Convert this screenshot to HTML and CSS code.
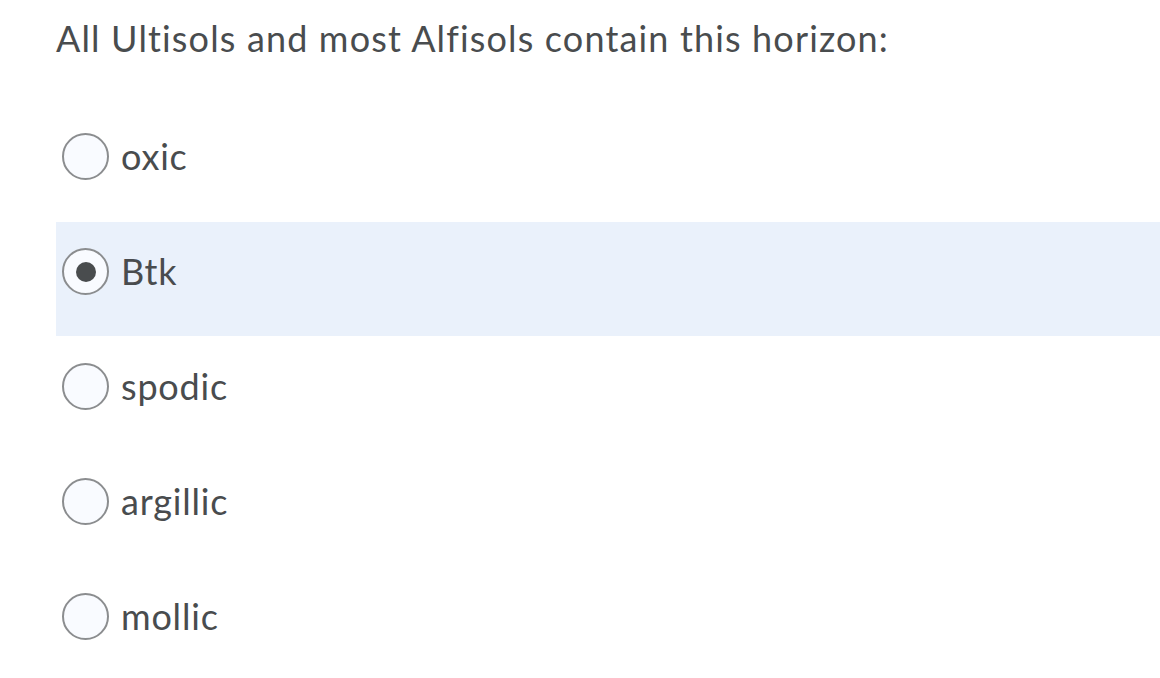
FILE: index.html
```html
<!DOCTYPE html>
<html>
<head>
<meta charset="utf-8">
<link rel="stylesheet" href="styles.css">
</head>
<body>
<div class="question">
  <p class="prompt">All Ultisols and most Alfisols contain this horizon:</p>
  <div class="options">
    <label class="option"><span class="radio"></span><span class="label">oxic</span></label>
    <label class="option selected"><span class="radio checked"></span><span class="label">Btk</span></label>
    <label class="option"><span class="radio"></span><span class="label">spodic</span></label>
    <label class="option"><span class="radio"></span><span class="label">argillic</span></label>
    <label class="option"><span class="radio"></span><span class="label">mollic</span></label>
  </div>
</div>
</body>
</html>
```
FILE: styles.css
```css
html, body {
  margin: 0;
  padding: 0;
  background: #ffffff;
}
body {
  font-family: Lato, "Liberation Sans", sans-serif;
  color: #494c4e;
  font-variant-ligatures: none;
}
.question {
  padding-left: 56px;
}
.prompt {
  margin: 0;
  height: 107px;
  font-size: 36px;
  line-height: 76px;
  font-weight: 400;
  letter-spacing: 1.15px;
}
.options {
  display: flex;
  flex-direction: column;
}
.option {
  display: flex;
  align-items: center;
  gap: 12px;
  height: 114px;
  box-sizing: border-box;
  padding: 0 0 15px 6px;
  font-size: 36px;
  letter-spacing: 0.8px;
}
.option + .option {
  margin-top: 1px;
}
.option.selected {
  background: #eaf1fb;
}
.radio {
  width: 47px;
  height: 47px;
  box-sizing: border-box;
  border: 2px solid #8b8d8f;
  border-radius: 50%;
  background: #f9fbff;
  display: flex;
  align-items: center;
  justify-content: center;
  flex: none;
}
.radio.checked::after {
  content: "";
  width: 20px;
  height: 20px;
  border-radius: 50%;
  background: #494c4e;
}
.label {
  line-height: 47px;
}
```
